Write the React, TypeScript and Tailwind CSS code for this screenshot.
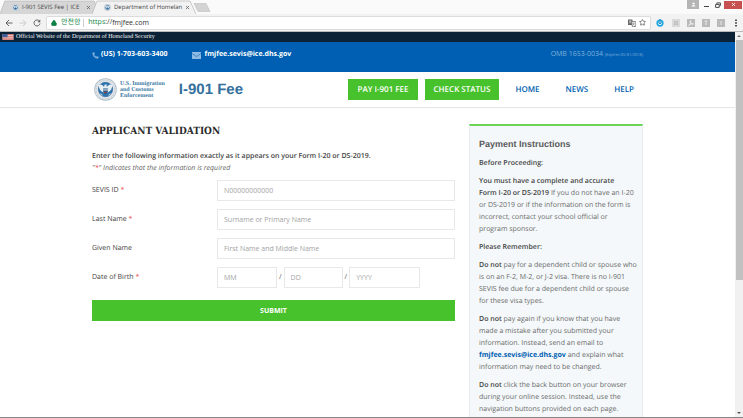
import type { ReactNode } from "react";
import { Lock, Phone, Star, User, X } from "lucide-react";

const Seal = ({ className }: { className: string }) => (
  <svg viewBox="0 0 48 48" className={className} aria-hidden="true">
    <circle cx="24" cy="24" r="23.5" fill="#a9b8c3" />
    <circle cx="24" cy="24" r="22" fill="#e6ebee" />
    <circle cx="24" cy="24" r="19.5" fill="none" stroke="#a3b3c0" strokeWidth="2" strokeDasharray="1.5 1.8" />
    <circle cx="24" cy="24" r="16.5" fill="#d9c9cc" />
    <circle cx="24" cy="24" r="15.5" fill="#2c74ae" />
    <path d="M10 15c4-3 8-1 11 4l1-5 4-1 1 6c3-5 7-7 11-4 0 7-3 12-8 14l-6 6-6-6c-5-2-8-7-8-14z" fill="#e8eff3" />
    <path d="M19 22h10v5c0 4-2 6-5 8-3-2-5-4-5-8z" fill="#1e5283" />
    <path d="M19 24h10v2H19z" fill="#fff" />
    <path d="M21 29h6v2h-6z" fill="#b04a4a" />
    <path d="M13 33l5 3M35 33l-5 3" stroke="#fff" strokeWidth="1.5" />
  </svg>
);

const Flag = () => (
  <svg viewBox="0 0 24 13" className="h-[6px] w-3" aria-hidden="true">
    <path d="M0 0h24v13H0z" fill="#f1dcd8" />
    <path d="M0 1h24M0 5h24M0 9h24M0 12.5h24" stroke="#c9504b" strokeWidth="1.8" />
    <path d="M0 0h11v7H0z" fill="#3f5c97" />
  </svg>
);

interface TabProps {
  title: string;
  active?: boolean;
}

const Tab = ({ title, active }: TabProps) => (
  <div className={active ? "relative z-10 -ml-2 h-[14px] w-[104px]" : "relative h-[14px] w-[100px]"}>
    <svg viewBox="0 0 104 14" preserveAspectRatio="none" className="absolute inset-0 h-full w-full" aria-hidden="true">
      <path d="M0 14L5 1H98L104 14" fill={active ? "#f2f2f2" : "#d6d6d6"} stroke="#b5b5b5" strokeWidth="0.7" />
    </svg>
    <div className="relative flex h-full items-center gap-[3px] pr-[9px] pl-[12px]">
      <Seal className="h-[7px] w-[7px] shrink-0" />
      <span className="flex-1 text-[6px] leading-[14px] whitespace-nowrap text-[#444]">{title}</span>
      <button type="button" aria-label="Close tab">
        <X className="h-[5px] w-[5px] text-[#666]" strokeWidth={4} />
      </button>
    </div>
  </div>
);

const TitleBar = () => (
  <div className="flex h-[14px] items-start bg-[#fafafa]">
    <Tab title="I-901 SEVIS Fee | ICE" />
    <Tab title="Department of Homelan" active />
    <button type="button" aria-label="New tab" className="-ml-[3px] pt-[3px]">
      <svg viewBox="0 0 18 9" className="h-[9px] w-[18px]">
        <path d="M1 .5h12l4 8H5z" fill="#d3d3d3" stroke="#bdbdbd" strokeWidth="0.6" />
      </svg>
    </button>
    <div className="ml-auto flex h-[9px] items-center">
      <button type="button" aria-label="Profile" className="mr-[5px] flex h-[9px] w-3 items-center justify-center bg-[#b5b5b5]">
        <User className="h-[5px] w-[5px] fill-white text-white" strokeWidth={2} />
      </button>
      <button type="button" aria-label="Minimize" className="mr-[6px] h-[5px] w-[5px] border-b border-[#444]" />
      <button type="button" aria-label="Restore" className="mr-[3px]">
        <svg viewBox="0 0 10 10" className="h-[6px] w-[6px]">
          <path d="M3 3V1.5h6v4.5H7.5M1 4h6v5H1z" fill="none" stroke="#444" strokeWidth="1.6" />
        </svg>
      </button>
      <button type="button" aria-label="Close window" className="mr-px flex h-[8px] w-[18px] items-center justify-center bg-[#c75050]">
        <X className="h-[5px] w-[5px] text-white" strokeWidth={4} />
      </button>
    </div>
  </div>
);

const ToolbarIcon = ({ children }: { children: ReactNode }) => (
  <button type="button" aria-label="Extension">
    <svg viewBox="0 0 16 16" className="h-2 w-2">
      <path d="M0 0h16v16H0z" fill="#bababa" />
      {children}
    </svg>
  </button>
);

const Toolbar = () => (
  <div className="flex h-[18px] items-center border-b border-[#b9b9b9] bg-[#f2f2f2] pl-[5px]">
    <div className="flex items-center gap-[6px]">
      <button type="button" aria-label="Back">
        <svg viewBox="0 0 16 16" className="h-2 w-2" fill="none" stroke="#555" strokeWidth="1.8">
          <path d="M15 8H2M8 2L2 8l6 6" />
        </svg>
      </button>
      <button type="button" aria-label="Forward">
        <svg viewBox="0 0 16 16" className="h-2 w-2" fill="none" stroke="#c8c8c8" strokeWidth="1.8">
          <path d="M1 8h13M8 2l6 6-6 6" />
        </svg>
      </button>
      <button type="button" aria-label="Reload">
        <svg viewBox="0 0 16 16" className="h-2 w-2" fill="none" stroke="#555" strokeWidth="1.8">
          <path d="M13 4.5A6 6 0 1 0 14 9" />
          <path d="M14.5 1v5.5H9z" fill="#555" stroke="none" />
        </svg>
      </button>
    </div>
    <div className="ml-[5px] flex h-[14px] flex-1 items-center rounded-[2px] border border-[#dcdcdc] bg-white pr-1 pl-1">
      <Lock className="h-[6px] w-[6px] fill-[#0b8043] text-[#0b8043]" strokeWidth={3} />
      <span className="ml-1 text-[7px] leading-3 text-[#0b8043]">안전함</span>
      <span className="ml-[3px] h-2 w-px bg-[#ccc]" />
      <div className="ml-1 flex flex-1 text-[7px] leading-3 text-[#333]">
        <span className="text-[#0b8043]">https</span>
        <span>://</span>
        <input aria-label="Address" defaultValue="fmjfee.com" className="min-w-0 flex-1 bg-transparent outline-none" />
      </div>
      <button type="button" aria-label="Translate" className="mr-[3px]">
        <svg viewBox="0 0 16 16" className="h-2 w-2">
          <path d="M0 1h9v11H0z" fill="#666" />
          <path d="M2 4h5M4.5 3v1M2.5 9l4-5M3 5l4 4" stroke="#fff" strokeWidth="1" />
          <path d="M7.5 5h8v10h-7z" fill="#fff" stroke="#666" strokeWidth="1.4" />
          <path d="M9.5 8h4M12 8c0 2-1 4-3 5M10 9l3 4" stroke="#666" fill="none" />
        </svg>
      </button>
      <button type="button" aria-label="Bookmark">
        <Star className="h-[7px] w-[7px] text-[#555]" strokeWidth={2.5} />
      </button>
    </div>
    <div className="ml-[5px] flex items-center gap-[7px] pr-[6px]">
      <button type="button" aria-label="Downloader" className="mr-px">
        <svg viewBox="0 0 16 16" className="h-2 w-2">
          <circle cx="8" cy="8" r="5.5" fill="#fff" stroke="#1fa8e0" strokeWidth="3.5" />
          <path d="M8 0v9M5 6.5L8 10l3-3.5" stroke="#1786c4" strokeWidth="2" fill="none" />
        </svg>
      </button>
      <ToolbarIcon>
        <path d="M0 0h16v16H0z" fill="#dadada" />
        <path d="M4 5h3M9 5h3M4 8h8M4 11h3M9 11h3" stroke="#aaa" strokeWidth="1.5" />
      </ToolbarIcon>
      <ToolbarIcon>
        <path d="M3 13c4-3 6-7 4-10-2 3 2 8 6 7-3-1-7 0-10 3z" fill="none" stroke="#fff" strokeWidth="1.3" />
      </ToolbarIcon>
      <ToolbarIcon>
        <path d="M5 4h6M8 4v8" stroke="#eee" strokeWidth="1.8" />
      </ToolbarIcon>
      <ToolbarIcon>
        <path d="M8 4v8" stroke="#e4e4e4" strokeWidth="2" />
      </ToolbarIcon>
      <button type="button" aria-label="Menu" className="pl-[3px]">
        <svg viewBox="0 0 4 16" className="h-2 w-[2px]" fill="#555">
          <path d="M0 1h4v3H0zM0 6.5h4v3H0zM0 12h4v3H0z" />
        </svg>
      </button>
    </div>
  </div>
);

const Header = () => (
  <header>
    <div className="flex h-[10px] items-center gap-px bg-[#0b2236] pl-[2px]">
      <Flag />
      <span className="pl-px font-['Liberation_Serif'] text-[6px] leading-3 text-white">
        Official Website of the Department of Homeland Security
      </span>
    </div>
    <div className="h-[30px] bg-[#005fb2] text-[7px] text-white">
      <div className="mx-auto flex h-[26px] max-w-[551px] items-center">
        <Phone className="mr-[2px] h-[7px] w-[7px] fill-[#7fb0dc] text-[#7fb0dc]" strokeWidth={1} />
        <span className="font-bold">(US) 1-703-603-3400</span>
        <svg viewBox="0 0 18 14" className="mr-[4px] ml-6 h-[7px] w-[9px]" aria-hidden="true">
          <path d="M0 0h18v14H0z" fill="#8fbbe2" />
          <path d="M0 3l9 6 9-6" fill="none" stroke="#2d78bf" strokeWidth="1.6" />
        </svg>
        <a href="mailto:fmjfee.sevis@ice.dhs.gov" className="font-bold">fmjfee.sevis@ice.dhs.gov</a>
        <span className="ml-auto text-[#7fb0dc]">
          OMB 1653-0034 <span className="text-[4px]">(Expires 05/31/2018)</span>
        </span>
      </div>
    </div>
    <div className="border-b border-[#e6e6e6] bg-white">
      <div className="mx-auto flex h-[35px] max-w-[551px] items-center">
        <a href="#home" className="flex items-center pl-[2px]">
          <Seal className="h-[23px] w-[23px]" />
          <span className="ml-[3px] font-['Liberation_Serif'] text-[6px] leading-[6px] font-bold whitespace-nowrap text-[#3d7ba6]">
            U.S. Immigration<br />and Customs<br />Enforcement
          </span>
          <span className="ml-[14px] font-['Liberation_Sans'] text-[15px] leading-5 font-bold whitespace-nowrap text-[#35709c]">I-901 Fee</span>
        </a>
        <nav className="ml-auto flex items-center pr-[9px] text-[8px] font-semibold whitespace-nowrap text-[#005fb2]">
          <a href="#pay" className="bg-[#48c22c] px-[9px] leading-[21px] text-white">PAY I-901 FEE</a>
          <a href="#status" className="ml-[7px] bg-[#48c22c] px-[9px] leading-[21px] text-white">CHECK STATUS</a>
          <a href="#home" className="ml-4">HOME</a>
          <a href="#news" className="ml-[26px]">NEWS</a>
          <a href="#help" className="ml-[26px]">HELP</a>
        </nav>
      </div>
    </div>
  </header>
);

interface FieldProps {
  id: string;
  label: string;
  required?: boolean;
  children: ReactNode;
}

const Field = ({ id, label, required, children }: FieldProps) => (
  <div className="grid grid-cols-[125px_1fr] items-center">
    <label htmlFor={id} className="text-[#444]">
      {label} {required && <span className="text-[#f04040]">*</span>}
    </label>
    {children}
  </div>
);

const inputClass =
  "h-[21px] min-w-0 border border-[#e8e8e8] bg-white px-[6px] text-[7px] text-[#555] outline-none placeholder:text-[#a3a3a3]";

const ValidationForm = () => (
  <form className="min-w-0 flex-1" onSubmit={(e) => e.preventDefault()}>
    <h1 className="font-['DejaVu_Serif_Condensed','DejaVu_Serif',serif] text-[10px] leading-4 font-bold text-[#2b2b2b]">APPLICANT VALIDATION</h1>
    <p className="mt-[11px] leading-3 font-semibold text-[#444]">
      Enter the following information exactly as it appears on your Form I-20 or DS-2019.
    </p>
    <p className="leading-3 text-[#666] italic">
      "<span className="text-[#f04040]">*</span>" Indicates that the information is required
    </p>
    <div className="mt-[5px] flex flex-col gap-2">
      <Field id="sevis" label="SEVIS ID" required>
        <input id="sevis" placeholder="N00000000000" className={inputClass} />
      </Field>
      <Field id="last" label="Last Name" required>
        <input id="last" placeholder="Surname or Primary Name" className={inputClass} />
      </Field>
      <Field id="given" label="Given Name">
        <input id="given" placeholder="First Name and Middle Name" className={inputClass} />
      </Field>
      <Field id="month" label="Date of Birth" required>
        <div className="flex items-center gap-[2px] text-[#555]">
          <input id="month" placeholder="MM" className={`${inputClass} w-[60px]`} />
          <span>/</span>
          <input aria-label="Day" placeholder="DD" className={`${inputClass} w-[59px]`} />
          <span>/</span>
          <input aria-label="Year" placeholder="YYYY" className={`${inputClass} w-[71px]`} />
        </div>
      </Field>
    </div>
    <button type="submit" className="mt-3 h-[21px] w-full bg-[#48c22c] font-bold text-white">SUBMIT</button>
  </form>
);

const Instructions = () => (
  <aside className="w-[174px] shrink-0 border-x border-t-2 border-x-[#e3ebee] border-t-[#6dd458] bg-[#f4f8fa] pt-3 pr-[3px] pb-4 pl-[9px] leading-3 text-[#6b6b6b]">
    <h2 className="font-['Liberation_Sans'] text-[9px] leading-3 font-bold text-[#5a5a5a]">Payment Instructions</h2>
    <div className="mt-2 flex flex-col gap-[6px] [&_b]:font-semibold [&_b]:text-[#444]">
      <p><b>Before Proceeding:</b></p>
      <p>
        <b>You must have a complete and accurate<br />Form I-20 or DS-2019</b> If you do not have an I-20
        <br />
        or DS-2019 or if the information on the form is incorrect, contact your school official or
        <br />
        program sponsor.
      </p>
      <p><b>Please Remember:</b></p>
      <p>
        <b>Do not</b> pay for a dependent child or spouse who is on an F-2, M-2, or J-2 visa. There is no I-901
        <br />
        SEVIS fee due for a dependent child or spouse
        <br />
        for these visa types.
      </p>
      <p>
        <b>Do not</b> pay again if you know that you have made a mistake after you submitted your information.
        Instead, send an email to{" "}
        <a href="mailto:fmjfee.sevis@ice.dhs.gov" className="font-bold text-[#005fb2]">fmjfee.sevis@ice.dhs.gov</a> and
        explain what information may need to be changed.
      </p>
      <p>
        <b>Do not</b> click the back button on your browser during your online session. Instead, use the navigation
        buttons provided on each page.
      </p>
    </div>
  </aside>
);

const Scrollbar = () => (
  <div className="flex w-2 shrink-0 flex-col items-center bg-[#f1f1f1]" aria-hidden="true">
    <svg viewBox="0 0 8 8" className="h-2 w-2"><path d="M2 5l2-2 2 2z" fill="#777" /></svg>
    <div className="w-[7px] flex-[240] bg-[#c1c1c1]" />
    <div className="flex-[129]" />
    <svg viewBox="0 0 8 8" className="h-2 w-2"><path d="M2 3l2 2 2-2z" fill="#555" /></svg>
  </div>
);

const App = () => (
  <div className="flex h-screen flex-col overflow-hidden border-b border-[#858585] bg-white font-['Open_Sans','Noto_Sans_CJK_KR',sans-serif] text-[7px] leading-3 [text-rendering:geometricPrecision]">
    <TitleBar />
    <Toolbar />
    <div className="flex min-h-0 flex-1">
      <div className="min-w-0 flex-1 overflow-hidden">
        <Header />
        <main className="mx-auto flex max-w-[551px] items-start gap-[14px] pt-4">
          <ValidationForm />
          <Instructions />
        </main>
      </div>
      <Scrollbar />
    </div>
  </div>
);

export default App;
